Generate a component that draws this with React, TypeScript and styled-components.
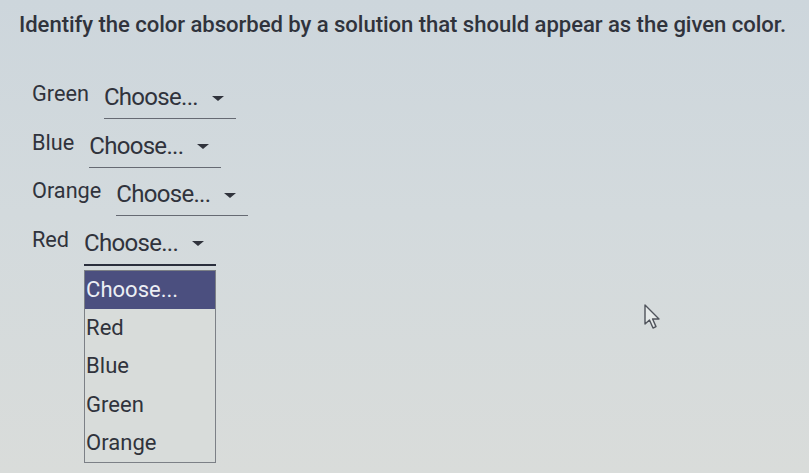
import React from "react";
import styled, { createGlobalStyle } from "styled-components";

const Global = createGlobalStyle`
  html, body { margin: 0; padding: 0; }
  body {
    width: 809px;
    height: 473px;
    overflow: hidden;
    background: linear-gradient(180deg, #cdd6dc 0%, #d3dadd 45%, #d9dcda 100%);
    font-family: Roboto, "Noto Sans", "Liberation Sans", sans-serif;
    color: #30333c;
  }
`;

const Page = styled.div`
  position: relative;
  width: 809px;
  height: 473px;
  box-sizing: border-box;
  padding: 11px 0 0 19px;
`;

const Title = styled.h1`
  margin: 0;
  font-size: 22.1px;
  line-height: 26px;
  font-weight: 500;
  white-space: nowrap;
  letter-spacing: -0.05px;
`;

const Rows = styled.div`
  display: flex;
  flex-direction: column;
  gap: 13.5px;
  margin: 47px 0 0 13px;
`;

const Row = styled.div`
  display: flex;
  align-items: baseline;
  gap: 15px;
`;

const Label = styled.span`
  font-size: 21.7px;
  line-height: 26px;
  position: relative;
  top: -4px;
`;

const SelectBox = styled.div<{ $focused?: boolean }>`
  position: relative;
  display: inline-flex;
  justify-content: space-between;
  align-items: center;
  box-sizing: border-box;
  width: 132px;
  padding: 0 12px 8px 0;
  font-size: 24px;
  line-height: 26px;
  letter-spacing: -0.7px;
  border-bottom: ${(p) => (p.$focused ? "2px solid #2a2e3c" : "1px solid #666a73")};
`;

const Caret = styled.span`
  width: 0;
  height: 0;
  border-left: 6.5px solid transparent;
  border-right: 6.5px solid transparent;
  border-top: 5.5px solid #30333c;
  margin-top: 2px;
`;

const Menu = styled.ul`
  position: absolute;
  left: 0;
  top: 40px;
  width: 132px;
  margin: 0;
  padding: 0;
  list-style: none;
  box-sizing: border-box;
  border: 1px solid #7c8086;
  background: #d8dcda;
  letter-spacing: 0;
`;

const Option = styled.li<{ $selected?: boolean }>`
  height: 38.4px;
  display: flex;
  align-items: center;
  padding-left: 1px;
  font-size: 22px;
  background: ${(p) => (p.$selected ? "#4b4f7f" : "transparent")};
  color: ${(p) => (p.$selected ? "#eceef4" : "#30333c")};
`;

const Cursor = styled.svg`
  position: absolute;
  left: 643px;
  top: 304px;
`;

const rows = [
  { label: "Green" },
  { label: "Blue" },
  { label: "Orange" },
  { label: "Red", open: true },
];

const options = ["Choose...", "Red", "Blue", "Green", "Orange"];

export default function App() {
  return (
    <>
      <Global />
      <Page>
        <Title>Identify the color absorbed by a solution that should appear as the given color.</Title>
        <Rows>
          {rows.map((r) => (
            <Row key={r.label}>
              <Label>{r.label}</Label>
              <SelectBox $focused={r.open}>
                <span>Choose...</span>
                <Caret />
                {r.open && (
                  <Menu>
                    {options.map((o, i) => (
                      <Option key={o} $selected={i === 0}>
                        {o}
                      </Option>
                    ))}
                  </Menu>
                )}
              </SelectBox>
            </Row>
          ))}
        </Rows>
        <Cursor width="18" height="26" viewBox="0 0 18 26">
          <path
            d="M2 1 L2 20 L6.5 16 L10 24 L13 22.6 L9.6 15 L16 15 Z"
            fill="#e6eaea"
            stroke="#50545c"
            strokeWidth="1.4"
            strokeLinejoin="round"
          />
        </Cursor>
      </Page>
    </>
  );
}
